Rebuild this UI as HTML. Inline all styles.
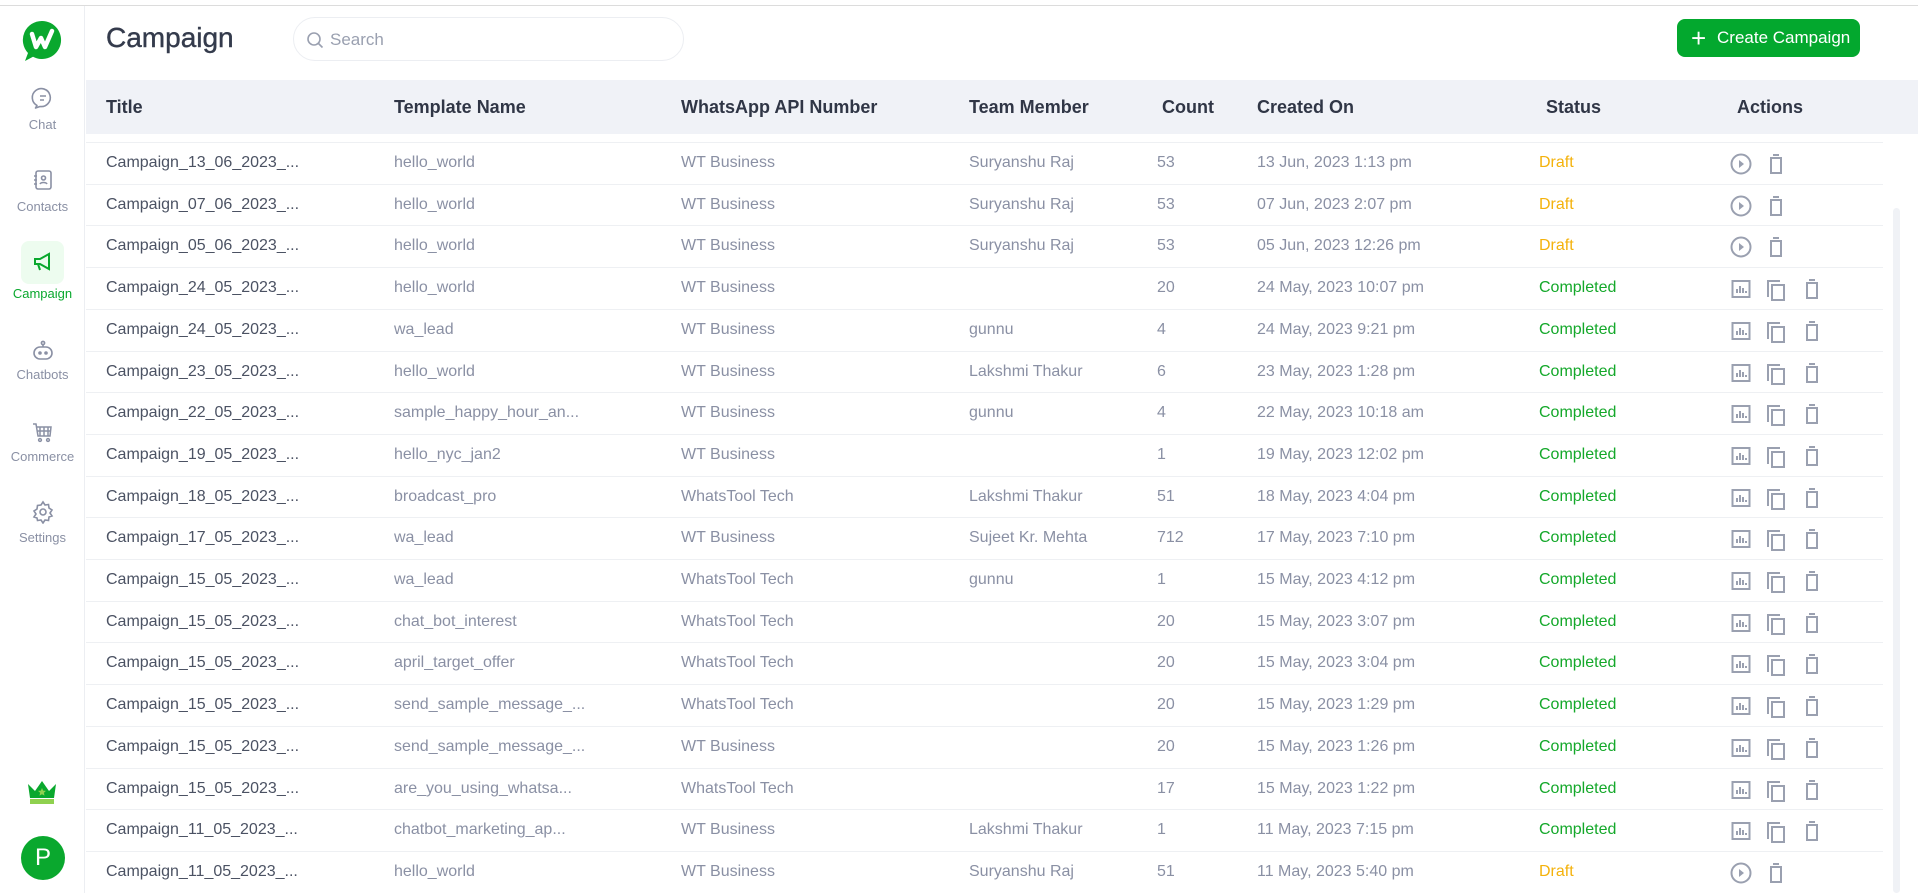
<!DOCTYPE html>
<html><head><meta charset="utf-8"><style>
*{margin:0;padding:0;box-sizing:border-box}
body{width:1918px;height:893px;overflow:hidden;background:#fff;font-family:"Liberation Sans",sans-serif;position:relative}
.topline{position:absolute;left:0;top:5px;width:1918px;height:1px;background:#dcdcdc}
.side{position:absolute;left:0;top:6px;width:85px;height:887px;border-right:1px solid #eceef2}
.nav{position:absolute;left:0;width:85px;text-align:center;font-size:13px;color:#8a90a4}
.nav svg{display:block;margin:0 auto}
.title{position:absolute;left:106px;top:22px;font-size:28px;color:#343b4c;-webkit-text-stroke:0.4px #343b4c}
.search{position:absolute;left:293px;top:17px;width:391px;height:44px;border:1px solid #eceef2;border-radius:22px}
.search span{position:absolute;left:36px;top:12px;font-size:17px;color:#9aa0b0}
.btn{position:absolute;left:1677px;top:19px;width:183px;height:38px;background:#03a82e;border-radius:8px;color:#fff;font-size:17px;line-height:38px;padding-left:40px}
.btn b{position:absolute;left:14px;top:0;font-weight:normal;font-size:26px}
.head{position:absolute;left:86px;top:80px;width:1832px;height:54px;background:#f0f2f7}
.h{position:absolute;top:97px;font-size:18px;font-weight:bold;color:#303646}
.row{position:absolute;left:86px;width:1797px;height:41.7px;border-top:1px solid #eef0f3}
.c{position:absolute;top:11px;font-size:16px;color:#8a90a4;white-space:nowrap}
.t{color:#4b5263}
.d{color:#f4b20c}.g{color:#14a82a}
.ic{position:absolute;top:10px}
.sb{position:absolute;left:1893px;top:208px;width:7px;height:685px;background:#f0f2f6;border-radius:4px}
</style></head><body>
<div class="topline"></div>
<div class="side">
 <svg style="position:absolute;left:21px;top:13px" width="42" height="44" viewBox="0 0 42 44"><path d="M21 2a19 19 0 1 1-9 35.7L4 42l3-8A19 19 0 0 1 21 2z" fill="#0aa82e"/><path d="M11 15l4 13 5-9 4 9 7-16" stroke="#fff" stroke-width="4.5" fill="none" stroke-linecap="round" stroke-linejoin="round"/></svg>
</div>
<div class="nav" style="top:86px"><svg width="24" height="24" viewBox="0 0 24 24" fill="none" stroke="#8a90a4" stroke-width="1.6"><path d="M6 19.5A9 9 0 1 1 9 20.5L4.5 22z" stroke-linejoin="round"/><path d="M9 10h6M9 14h4"/></svg><div style="margin-top:7px">Chat</div></div>
<div class="nav" style="top:168px"><svg width="24" height="24" viewBox="0 0 24 24" fill="none" stroke="#8a90a4" stroke-width="1.6"><rect x="5" y="3" width="15" height="18" rx="2"/><circle cx="12.5" cy="10" r="2"/><path d="M9 16c1-2 6-2 7 0M3 8h3M3 12h3M3 16h3"/></svg><div style="margin-top:7px">Contacts</div></div>
<div style="position:absolute;left:21px;top:241px;width:43px;height:43px;background:#edfcef;border-radius:8px"></div>
<div class="nav" style="top:250px;color:#0aa82e"><svg width="24" height="24" viewBox="0 0 24 24" fill="none" stroke="#0aa82e" stroke-width="2"><path d="M4 9h5l9-5v15l-9-5H4z"/><path d="M7 14l2 6"/></svg><div style="margin-top:12px">Campaign</div></div>
<div class="nav" style="top:339px"><svg width="26" height="24" viewBox="0 0 26 24" fill="none" stroke="#8a90a4" stroke-width="1.6"><circle cx="13" cy="4" r="1.6"/><path d="M13 6v2"/><rect x="4" y="8" width="18" height="12" rx="6"/><circle cx="10" cy="14" r="1" fill="#8a90a4"/><circle cx="16" cy="14" r="1" fill="#8a90a4"/></svg><div style="margin-top:4px">Chatbots</div></div>
<div class="nav" style="top:420px"><svg width="24" height="24" viewBox="0 0 24 24" fill="none" stroke="#8a90a4" stroke-width="1.5"><path d="M2 4h3l2 12h12l1-9H6M9 7v9M13 7v9M17 7v9M6 11h14"/><circle cx="9" cy="20" r="1.4"/><circle cx="17" cy="20" r="1.4"/></svg><div style="margin-top:5px">Commerce</div></div>
<div class="nav" style="top:500px"><svg width="24" height="24" viewBox="0 0 24 24" fill="none" stroke="#8a90a4" stroke-width="1.6"><circle cx="12" cy="12" r="3"/><path d="M12 2l2 3 3.5-.5.5 3.5 3 2-2 3 2 3-3 1-.5 3.5-3.5-.5-2 3-2-3-3.5.5L6 18l-3-1 2-3-2-3 3-2 .5-3.5L10 5z"/></svg><div style="margin-top:6px">Settings</div></div>
<svg style="position:absolute;left:27px;top:780px" width="30" height="25" viewBox="0 0 30 25"><path d="M1 4l7 7 7-10 7 10 7-7-2 14H3z" fill="#0aa82e"/><rect x="3" y="19" width="24" height="5" fill="#8fd14f"/><path d="M15 8l1.2 2.6 2.8.3-2.1 1.9.6 2.8-2.5-1.4-2.5 1.4.6-2.8-2.1-1.9 2.8-.3z" fill="#8fd14f"/></svg>
<div style="position:absolute;left:21px;top:836px;width:44px;height:44px;border-radius:50%;background:#0aa82e;color:#fff;font-size:24px;text-align:center;line-height:44px">P</div>

<div class="title">Campaign</div>
<div class="search"><svg style="position:absolute;left:12px;top:13px" width="18" height="18" viewBox="0 0 18 18" fill="none" stroke="#9aa0b0" stroke-width="1.6"><circle cx="8" cy="8" r="6"/><path d="M12.5 12.5l4 4"/></svg><span>Search</span></div>
<div class="btn"><b>+</b>Create Campaign</div>
<div class="head"></div>
<div class="h" style="left:106px">Title</div>
<div class="h" style="left:394px">Template Name</div>
<div class="h" style="left:681px">WhatsApp API Number</div>
<div class="h" style="left:969px">Team Member</div>
<div class="h" style="left:1162px">Count</div>
<div class="h" style="left:1257px">Created On</div>
<div class="h" style="left:1546px">Status</div>
<div class="h" style="left:1737px">Actions</div>
<div class="sb"></div>
<div id="rows"></div>
<script>
var d=[
["Campaign_13_06_2023_...","hello_world","WT Business","Suryanshu Raj","53","13 Jun, 2023 1:13 pm",0],
["Campaign_07_06_2023_...","hello_world","WT Business","Suryanshu Raj","53","07 Jun, 2023 2:07 pm",0],
["Campaign_05_06_2023_...","hello_world","WT Business","Suryanshu Raj","53","05 Jun, 2023 12:26 pm",0],
["Campaign_24_05_2023_...","hello_world","WT Business","","20","24 May, 2023 10:07 pm",1],
["Campaign_24_05_2023_...","wa_lead","WT Business","gunnu","4","24 May, 2023 9:21 pm",1],
["Campaign_23_05_2023_...","hello_world","WT Business","Lakshmi Thakur","6","23 May, 2023 1:28 pm",1],
["Campaign_22_05_2023_...","sample_happy_hour_an...","WT Business","gunnu","4","22 May, 2023 10:18 am",1],
["Campaign_19_05_2023_...","hello_nyc_jan2","WT Business","","1","19 May, 2023 12:02 pm",1],
["Campaign_18_05_2023_...","broadcast_pro","WhatsTool Tech","Lakshmi Thakur","51","18 May, 2023 4:04 pm",1],
["Campaign_17_05_2023_...","wa_lead","WT Business","Sujeet Kr. Mehta","712","17 May, 2023 7:10 pm",1],
["Campaign_15_05_2023_...","wa_lead","WhatsTool Tech","gunnu","1","15 May, 2023 4:12 pm",1],
["Campaign_15_05_2023_...","chat_bot_interest","WhatsTool Tech","","20","15 May, 2023 3:07 pm",1],
["Campaign_15_05_2023_...","april_target_offer","WhatsTool Tech","","20","15 May, 2023 3:04 pm",1],
["Campaign_15_05_2023_...","send_sample_message_...","WhatsTool Tech","","20","15 May, 2023 1:29 pm",1],
["Campaign_15_05_2023_...","send_sample_message_...","WT Business","","20","15 May, 2023 1:26 pm",1],
["Campaign_15_05_2023_...","are_you_using_whatsa...","WhatsTool Tech","","17","15 May, 2023 1:22 pm",1],
["Campaign_11_05_2023_...","chatbot_marketing_ap...","WT Business","Lakshmi Thakur","1","11 May, 2023 7:15 pm",1],
["Campaign_11_05_2023_...","hello_world","WT Business","Suryanshu Raj","51","11 May, 2023 5:40 pm",0]];
var S='stroke="#9aa0b0" stroke-width="2" fill="none"';
var play='<svg width="22" height="22" viewBox="0 0 22 22"><circle cx="11" cy="11" r="9.5" '+S+'/><path d="M9 7l5 4-5 4z" fill="#9aa0b0"/></svg>';
var trash='<svg width="20" height="22" viewBox="0 0 20 22"><path d="M4 5h12M7 2h6M5 5v15h10V5" '+S+' stroke-width="2.2"/></svg>';
var chart='<svg width="20" height="22" viewBox="0 0 20 22"><rect x="1.5" y="3" width="17" height="16" '+S+'/><path d="M6 15v-4M9 15V8M12 15v-5M15 15v-2" '+S+'/></svg>';
var copy='<svg width="22" height="24" viewBox="0 0 22 24"><path d="M3 19V3h12" '+S+' stroke-width="2.2"/><rect x="7" y="7" width="12" height="15" '+S+' stroke-width="2.2"/></svg>';
var h='',x=[20,308,595,883,1071,1171,1453];
d.forEach(function(r,i){
 h+='<div class="row" style="top:'+(142+i*41.7)+'px">';
 for(var k=0;k<6;k++)h+='<div class="c'+(k==0?' t':'')+'" style="left:'+x[k]+'px">'+r[k]+'</div>';
 h+='<div class="c '+(r[6]?'g':'d')+'" style="left:1453px">'+(r[6]?'Completed':'Draft')+'</div>';
 if(r[6])h+='<div class="ic" style="left:1645px">'+chart+'</div><div class="ic" style="left:1679px">'+copy+'</div><div class="ic" style="left:1716px">'+trash+'</div>';
 else h+='<div class="ic" style="left:1644px">'+play+'</div><div class="ic" style="left:1680px">'+trash+'</div>';
 h+='</div>';
});
document.getElementById('rows').innerHTML=h;
</script>
</body></html>
